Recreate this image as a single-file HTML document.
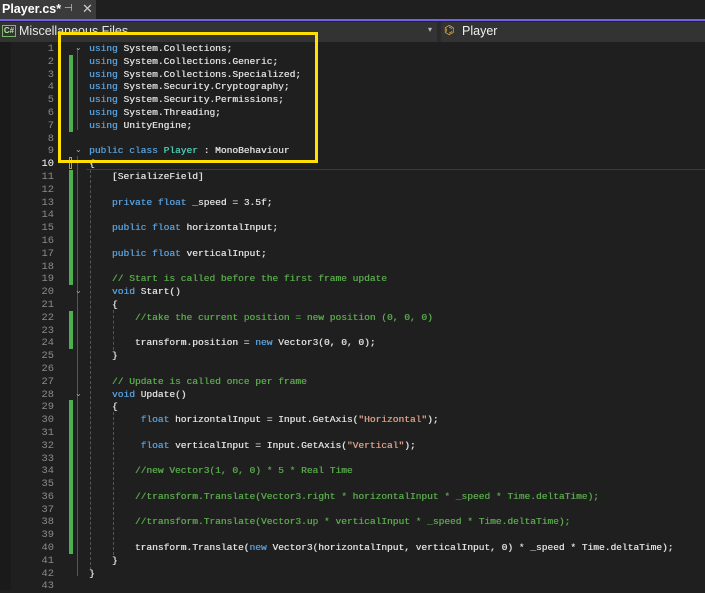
<!DOCTYPE html>
<html><head><meta charset="utf-8"><style>
body{margin:0;width:705px;height:590px;background:#1f1f1f;overflow:hidden;position:relative;font-family:"Liberation Mono",monospace;}
.ui{font-family:"Liberation Sans",sans-serif;}
#tabs{position:absolute;left:0;top:0;width:705px;height:19px;background:#1f1f1f;}
#tab{position:absolute;left:0;top:0;width:96px;height:19px;background:#3b3b3b;color:#fff;font-size:12.5px;font-weight:bold;font-family:"Liberation Sans",sans-serif;}
#purple{position:absolute;left:0;top:19px;width:705px;height:2px;background:#7160e8;}
#nav{position:absolute;left:0;top:21px;width:705px;height:20px;background:#333;border-top:1px solid #262626}
#leftstrip{position:absolute;left:0;top:42px;width:11px;height:548px;background:#1a1a1a;}
.nums{position:absolute;left:12px;top:43px;width:42px;text-align:right;color:#8a8a8a;font-size:10.4px;line-height:12.79px;font-family:"Liberation Mono",monospace;}
.code{position:absolute;left:89px;top:43px;white-space:pre;color:#dcdcdc;font-size:9.55px;line-height:12.79px;margin:0;font-family:"Liberation Mono",monospace;text-shadow:0.35px 0 0 currentColor;}
.k{color:#569cd6}.t{color:#4ec9b0}.c{color:#57a64a}.s{color:#d69d85}
.g{position:absolute;left:69px;width:4px;background:#4caf50;}
.chev{position:absolute;left:75px;color:#aaa;font-size:8px;line-height:12.8px;font-family:"DejaVu Sans",sans-serif}
</style></head><body>
<div id="tabs"><div id="tab"><span style="position:absolute;left:2px;top:2px">Player.cs*</span>
<span style="position:absolute;left:64px;top:3px;font-size:10px;font-weight:normal;color:#ccc">⊣</span>
<span style="position:absolute;left:82px;top:1px;font-size:13px;font-weight:normal;color:#ccc">✕</span></div></div>
<div id="purple"></div>
<div id="nav" class="ui">
<div style="position:absolute;left:2px;top:3px;width:12px;height:10px;border:1px solid #7ab96a;color:#b5e0a5;font-size:8px;line-height:10px;text-align:center;font-weight:bold">C#</div>
<span style="position:absolute;left:19px;top:2px;color:#e8e8e8;font-size:12.5px">Miscellaneous Files</span>
<span style="position:absolute;left:428px;top:3px;color:#bbb;font-size:8px">▾</span>
<div style="position:absolute;left:437px;top:0;width:4px;height:20px;background:#2a2a2a"></div>
<span style="position:absolute;left:444px;top:1px;color:#e8b84a;font-size:12px">⌬</span>
<span style="position:absolute;left:462px;top:2px;color:#f0f0f0;font-size:12.5px">Player</span>
</div>
<div id="leftstrip"></div>
<div style="position:absolute;left:77px;top:48px;width:1px;height:82px;background:#555"></div>
<div style="position:absolute;left:77px;top:156px;width:1px;height:420px;background:#555"></div>
<div style="position:absolute;left:90px;top:170px;height:400px;border-left:1px dashed #555"></div>
<div style="position:absolute;left:113px;top:310px;height:40px;border-left:1px dashed #555"></div>
<div style="position:absolute;left:113px;top:412px;height:143px;border-left:1px dashed #555"></div>
<div class="g" style="top:55px;height:77px"></div>
<div style="position:absolute;left:69px;top:157px;width:3px;height:12px;border:1px solid #c9a227;box-sizing:border-box"></div>
<div class="g" style="top:170px;height:115px"></div>
<div class="g" style="top:311px;height:38px"></div>
<div class="g" style="top:400px;height:154px"></div>
<div style="position:absolute;left:86px;top:169px;width:619px;height:1px;background:#3a3a3a"></div>
<div class="chev" style="top:42px">⌄</div><div class="chev" style="top:144px">⌄</div>
<div class="chev" style="top:285px">⌄</div><div class="chev" style="top:388px">⌄</div>
<div class="nums">1<br>2<br>3<br>4<br>5<br>6<br>7<br>8<br>9<br><span style="color:#fff">10</span><br>11<br>12<br>13<br>14<br>15<br>16<br>17<br>18<br>19<br>20<br>21<br>22<br>23<br>24<br>25<br>26<br>27<br>28<br>29<br>30<br>31<br>32<br>33<br>34<br>35<br>36<br>37<br>38<br>39<br>40<br>41<br>42<br>43</div>
<pre class="code"><span class=k>using</span> System.Collections;
<span class=k>using</span> System.Collections.Generic;
<span class=k>using</span> System.Collections.Specialized;
<span class=k>using</span> System.Security.Cryptography;
<span class=k>using</span> System.Security.Permissions;
<span class=k>using</span> System.Threading;
<span class=k>using</span> UnityEngine;

<span class=k>public class</span> <span class=t>Player</span> : MonoBehaviour
{
    [SerializeField]

    <span class=k>private float</span> _speed = 3.5f;

    <span class=k>public float</span> horizontalInput;

    <span class=k>public float</span> verticalInput;

    <span class=c>// Start is called before the first frame update</span>
    <span class=k>void</span> Start()
    {
        <span class=c>//take the current position = new position (0, 0, 0)</span>

        transform.position = <span class=k>new</span> Vector3(0, 0, 0);
    }

    <span class=c>// Update is called once per frame</span>
    <span class=k>void</span> Update()
    {
         <span class=k>float</span> horizontalInput = Input.GetAxis(<span class=s>"Horizontal"</span>);

         <span class=k>float</span> verticalInput = Input.GetAxis(<span class=s>"Vertical"</span>);

        <span class=c>//new Vector3(1, 0, 0) * 5 * Real Time</span>

        <span class=c>//transform.Translate(Vector3.right * horizontalInput * _speed * Time.deltaTime);</span>

        <span class=c>//transform.Translate(Vector3.up * verticalInput * _speed * Time.deltaTime);</span>

        transform.Translate(<span class=k>new</span> Vector3(horizontalInput, verticalInput, 0) * _speed * Time.deltaTime);
    }
}
</pre>
<div style="position:absolute;left:58px;top:32px;width:260px;height:131px;border:3px solid #ffe000;box-sizing:border-box"></div>
</body></html>
